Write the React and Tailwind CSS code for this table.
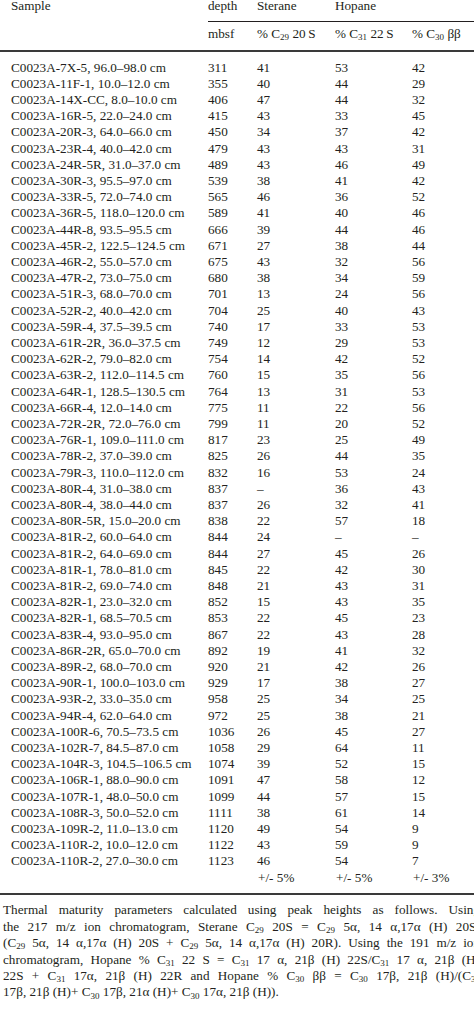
import React from 'react';

const rows = [
    ['C0023A-7X-5, 96.0–98.0 cm', '311', '41', '53', '42'],
    ['C0023A-11F-1, 10.0–12.0 cm', '355', '40', '44', '29'],
    ['C0023A-14X-CC, 8.0–10.0 cm', '406', '47', '44', '32'],
    ['C0023A-16R-5, 22.0–24.0 cm', '415', '43', '33', '45'],
    ['C0023A-20R-3, 64.0–66.0 cm', '450', '34', '37', '42'],
    ['C0023A-23R-4, 40.0–42.0 cm', '479', '43', '43', '31'],
    ['C0023A-24R-5R, 31.0–37.0 cm', '489', '43', '46', '49'],
    ['C0023A-30R-3, 95.5–97.0 cm', '539', '38', '41', '42'],
    ['C0023A-33R-5, 72.0–74.0 cm', '565', '46', '36', '52'],
    ['C0023A-36R-5, 118.0–120.0 cm', '589', '41', '40', '46'],
    ['C0023A-44R-8, 93.5–95.5 cm', '666', '39', '44', '46'],
    ['C0023A-45R-2, 122.5–124.5 cm', '671', '27', '38', '44'],
    ['C0023A-46R-2, 55.0–57.0 cm', '675', '43', '32', '56'],
    ['C0023A-47R-2, 73.0–75.0 cm', '680', '38', '34', '59'],
    ['C0023A-51R-3, 68.0–70.0 cm', '701', '13', '24', '56'],
    ['C0023A-52R-2, 40.0–42.0 cm', '704', '25', '40', '43'],
    ['C0023A-59R-4, 37.5–39.5 cm', '740', '17', '33', '53'],
    ['C0023A-61R-2R, 36.0–37.5 cm', '749', '12', '29', '53'],
    ['C0023A-62R-2, 79.0–82.0 cm', '754', '14', '42', '52'],
    ['C0023A-63R-2, 112.0–114.5 cm', '760', '15', '35', '56'],
    ['C0023A-64R-1, 128.5–130.5 cm', '764', '13', '31', '53'],
    ['C0023A-66R-4, 12.0–14.0 cm', '775', '11', '22', '56'],
    ['C0023A-72R-2R, 72.0–76.0 cm', '799', '11', '20', '52'],
    ['C0023A-76R-1, 109.0–111.0 cm', '817', '23', '25', '49'],
    ['C0023A-78R-2, 37.0–39.0 cm', '825', '26', '44', '35'],
    ['C0023A-79R-3, 110.0–112.0 cm', '832', '16', '53', '24'],
    ['C0023A-80R-4, 31.0–38.0 cm', '837', '–', '36', '43'],
    ['C0023A-80R-4, 38.0–44.0 cm', '837', '26', '32', '41'],
    ['C0023A-80R-5R, 15.0–20.0 cm', '838', '22', '57', '18'],
    ['C0023A-81R-2, 60.0–64.0 cm', '844', '24', '–', '–'],
    ['C0023A-81R-2, 64.0–69.0 cm', '844', '27', '45', '26'],
    ['C0023A-81R-1, 78.0–81.0 cm', '845', '22', '42', '30'],
    ['C0023A-81R-2, 69.0–74.0 cm', '848', '21', '43', '31'],
    ['C0023A-82R-1, 23.0–32.0 cm', '852', '15', '43', '35'],
    ['C0023A-82R-1, 68.5–70.5 cm', '853', '22', '45', '23'],
    ['C0023A-83R-4, 93.0–95.0 cm', '867', '22', '43', '28'],
    ['C0023A-86R-2R, 65.0–70.0 cm', '892', '19', '41', '32'],
    ['C0023A-89R-2, 68.0–70.0 cm', '920', '21', '42', '26'],
    ['C0023A-90R-1, 100.0–103.0 cm', '929', '17', '38', '27'],
    ['C0023A-93R-2, 33.0–35.0 cm', '958', '25', '34', '25'],
    ['C0023A-94R-4, 62.0–64.0 cm', '972', '25', '38', '21'],
    ['C0023A-100R-6, 70.5–73.5 cm', '1036', '26', '45', '27'],
    ['C0023A-102R-7, 84.5–87.0 cm', '1058', '29', '64', '11'],
    ['C0023A-104R-3, 104.5–106.5 cm', '1074', '39', '52', '15'],
    ['C0023A-106R-1, 88.0–90.0 cm', '1091', '47', '58', '12'],
    ['C0023A-107R-1, 48.0–50.0 cm', '1099', '44', '57', '15'],
    ['C0023A-108R-3, 50.0–52.0 cm', '1111', '38', '61', '14'],
    ['C0023A-109R-2, 11.0–13.0 cm', '1120', '49', '54', '9'],
    ['C0023A-110R-2, 10.0–12.0 cm', '1122', '43', '59', '9'],
    ['C0023A-110R-2, 27.0–30.0 cm', '1123', '46', '54', '7'],
];

const Sub = ({ children }) => <sub className="text-[9px]">{children}</sub>;

// one justified line of the footnote
const Line = ({ children, last }) => (
    <div className={last ? 'text-left' : 'text-justify [text-align-last:justify]'}>{children}</div>
);

export default function App() {
    return (
        <div className="w-[474px] h-[1009px] overflow-hidden bg-white text-[#231f20] [font-family:'Liberation_Serif','Times_New_Roman',serif] text-[13.2px]">
            {/* Header row 1 */}
            <div className="flex h-[22px] leading-[12px]">
                <div className="w-[208px] pl-[11px]">Sample</div>
                <div className="flex-1 flex border-b border-[#231f20]">
                    <div className="w-[49px]">depth</div>
                    <div className="w-[78px]">Sterane</div>
                    <div className="flex-1">Hopane</div>
                </div>
            </div>

            {/* Header row 2 */}
            <div className="grid grid-cols-[208px_49px_78px_77px_1fr] h-[30px] pt-[4px] leading-[16.2px] border-b-2 border-[#3a3a3a]">
                <div className="pl-[11px]"></div>
                <div>mbsf</div>
                <div>% C<Sub>29</Sub> 20{'\u2009'}S</div>
                <div>% C<Sub>31</Sub> 22{'\u2009'}S</div>
                <div>% C<Sub>30</Sub> ββ</div>
            </div>

            {/* Data */}
            <div className="pt-[7.5px] pb-[7.5px] leading-[16.2px] border-b-2 border-[#3a3a3a]">
                {rows.map((r, i) => (
                    <div key={i} className="grid grid-cols-[208px_49px_78px_77px_1fr]">
                        <div className="pl-[11px] whitespace-nowrap">{r[0]}</div>
                        <div>{r[1]}</div>
                        <div>{r[2]}</div>
                        <div>{r[3]}</div>
                        <div>{r[4]}</div>
                    </div>
                ))}
                <div className="grid grid-cols-[208px_49px_78px_77px_1fr]">
                    <div></div>
                    <div></div>
                    <div className="pl-[1px]">+/- 5%</div>
                    <div className="pl-[1px]">+/- 5%</div>
                    <div className="pl-[1px]">+/- 3%</div>
                </div>
            </div>

            {/* Footnote */}
            <div className="w-[480px] pl-[3px] pt-[7px] leading-[16.4px] whitespace-nowrap">
                <Line>Thermal maturity parameters calculated using peak heights as follows. Using</Line>
                <Line>the 217 m/z ion chromatogram, Sterane C<Sub>29</Sub> 20S = C<Sub>29</Sub> 5α, 14 α,17α (H) 20S/</Line>
                <Line>(C<Sub>29</Sub> 5α, 14 α,17α (H) 20S + C<Sub>29</Sub> 5α, 14 α,17α (H) 20R). Using the 191 m/z ion</Line>
                <Line>chromatogram, Hopane % C<Sub>31</Sub> 22 S = C<Sub>31</Sub> 17 α, 21β (H) 22S/C<Sub>31</Sub> 17 α, 21β (H)</Line>
                <Line>22S + C<Sub>31</Sub> 17α, 21β (H) 22R and Hopane % C<Sub>30</Sub> ββ = C<Sub>30</Sub> 17β, 21β (H)/(C<Sub>30</Sub></Line>
                <Line last>17β, 21β (H)+ C<Sub>30</Sub> 17β, 21α (H)+ C<Sub>30</Sub> 17α, 21β (H)).</Line>
            </div>
        </div>
    );
}
